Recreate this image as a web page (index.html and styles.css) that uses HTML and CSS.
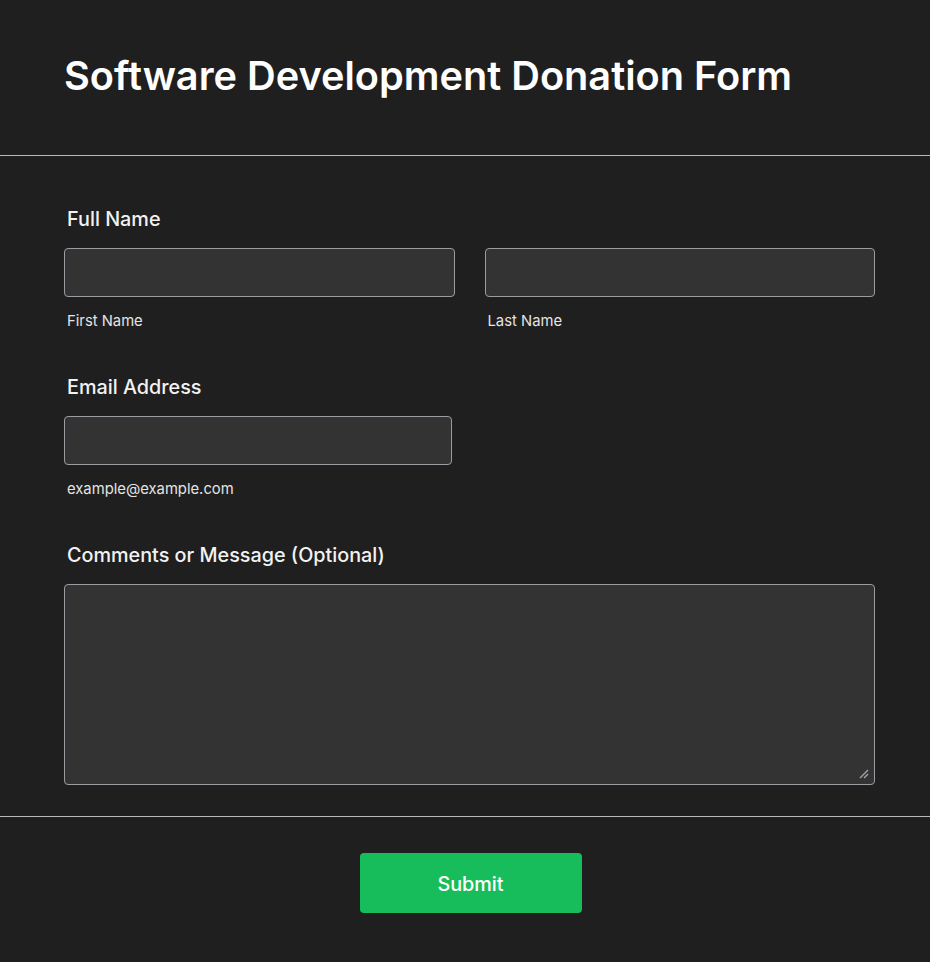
FILE: index.html
```html
<!DOCTYPE html>
<html lang="en">
<head>
    <meta charset="UTF-8">
    <meta name="viewport" content="width=device-width, initial-scale=1.0">
    <title>Software Development Donation Form</title>
    <link rel="stylesheet" href="styles.css">
</head>
<body>
    <div class="formWrap">
        <div class="formHeader">
            <h1>Software Development Donation Form</h1>
        </div>

        <form class="formBody" onsubmit="return false;">
            <div class="field">
                <label class="fieldLabel">Full Name</label>
                <div class="nameRow">
                    <div class="subField">
                        <input type="text" id="firstName">
                        <span class="subLabel">First Name</span>
                    </div>
                    <div class="subField">
                        <input type="text" id="lastName">
                        <span class="subLabel">Last Name</span>
                    </div>
                </div>
            </div>

            <div class="field">
                <label class="fieldLabel" for="email">Email Address</label>
                <div class="subField emailField">
                    <input type="email" id="email">
                    <span class="subLabel">example@example.com</span>
                </div>
            </div>

            <div class="field">
                <label class="fieldLabel" for="comments">Comments or Message (Optional)</label>
                <div class="textWrap">
                    <textarea id="comments"></textarea>
                    <!-- resize grip -->
                    <svg class="grip" width="10" height="10" viewBox="0 0 10 10">
                        <path d="M1 9 L9 1 M5 9 L9 5" stroke="#a4a6ab" stroke-width="1.3" fill="none"/>
                    </svg>
                </div>
            </div>
        </form>

        <div class="formFooter">
            <button type="submit" class="submitBtn">Submit</button>
        </div>
    </div>
</body>
</html>
```

FILE: styles.css
```css
* {
    margin: 0;
    padding: 0;
    box-sizing: border-box;
}

body {
    font-family: Inter, 'Noto Sans', Arial, sans-serif;
    background: #1f1f1f;
    color: #f2f2f2;
}

.formHeader {
    padding: 53px 64px 56px;
    border-bottom: 1px solid #b9b9b9;
}

.formHeader h1 {
    font-size: 39.7px;
    font-weight: 600;
    line-height: 46px;
    color: #ffffff;
}

.formBody {
    padding: 50px 55px 31px 64px;
}

.field {
    margin-bottom: 43px;
}

.field:last-child {
    margin-bottom: 0;
}

.fieldLabel {
    display: block;
    font-size: 19.8px;
    font-weight: 500;
    line-height: 24px;
    padding: 1px 0 0 3px;
    margin-bottom: 17px;
}

.nameRow {
    display: grid;
    grid-template-columns: 1fr 1fr;
    gap: 30px;
}

.subField {
    display: flex;
    flex-direction: column;
}

.emailField {
    width: 388px;
}

input,
textarea {
    width: 100%;
    background: #333333;
    border: 1px solid #9a9ca1;
    border-radius: 4px;
    color: #ffffff;
    font-family: inherit;
    font-size: 16px;
    outline: none;
}

input {
    height: 49px;
    padding: 0 12px;
}

.textWrap {
    position: relative;
}

textarea {
    display: block;
    height: 201px;
    padding: 10px 12px;
    resize: none;
}

.grip {
    position: absolute;
    right: 6px;
    bottom: 6px;
}

.subLabel {
    display: block;
    font-size: 14.8px;
    line-height: 20px;
    margin-top: 14px;
    padding-left: 3px;
    color: #e4e4e4;
}

.formFooter {
    border-top: 1px solid #b9b9b9;
    padding: 36px 55px 49px 66px;
    display: flex;
    justify-content: center;
}

.submitBtn {
    width: 222px;
    height: 60px;
    padding-top: 2px;
    background: #18bd5b;
    color: #ffffff;
    border: none;
    border-radius: 4px;
    font-family: inherit;
    font-size: 19.8px;
    font-weight: 500;
    cursor: pointer;
}
```
